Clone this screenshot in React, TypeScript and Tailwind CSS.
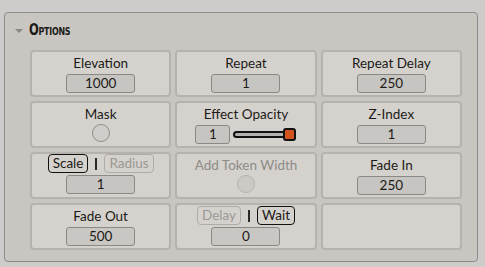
import React from "react";

const font = { fontFamily: "Lato, Roboto, sans-serif" };

function Input({ value, w = "w-[69px]", dotted = false }: { value: string; w?: string; dotted?: boolean }) {
  return (
    <div
      className={`${w} h-[19px] flex items-center justify-center rounded-[3px] border border-[#8a8986] text-[13.5px] leading-none text-[#1b1a17] ${dotted ? "bg-[#c9c7c3]" : "bg-[#c7c5c1]"}`}
    >
      {value}
    </div>
  );
}

function Cell({ children, className = "" }: { children?: React.ReactNode; className?: string }) {
  return (
    <div className={`h-[47px] rounded-[4px] border-2 border-[#b6b3ae] bg-[#d5d2cd] flex flex-col items-center ${className}`}>
      {children}
    </div>
  );
}

function Label({ children, disabled = false }: { children: React.ReactNode; disabled?: boolean }) {
  return (
    <div className={`h-[17px] text-[13.5px] leading-[17px] ${disabled ? "text-[#8e8c88]" : "text-[#1b1a17]"}`}>
      {children}
    </div>
  );
}

function Circle({ disabled = false }: { disabled?: boolean }) {
  return (
    <div
      className={`mt-[1px] w-[18px] h-[18px] rounded-full border ${disabled ? "border-[#b5b2ad] bg-[#cdcac5]" : "border-[#8f8d8a] bg-[#cfcdca]"}`}
    />
  );
}

function Btn({ children, active }: { children: React.ReactNode; active: boolean }) {
  return (
    <div
      className={`h-[19px] px-[4px] flex items-center rounded-[4px] border text-[13.5px] leading-none ${active ? "border-[#111] text-[#1b1a17]" : "border-[#aeaca8] text-[#9a9894]"}`}
    >
      {children}
    </div>
  );
}

function Sep() {
  return <div className="w-[2px] h-[12px] bg-[#2a2926]" />;
}

export default function App() {
  return (
    <div className="w-[485px] h-[267px] bg-[#cdcccb] pt-[12px] pl-[4px] pr-[7px]" style={font}>
      <div className="h-[250px] rounded-[4px] border border-[#8e8c88] bg-[#c9c6c1] flex flex-col">
        <div className="h-[37px] flex items-center pl-[10px] pb-[3px]">
          <svg width="8" height="6" viewBox="0 0 8 6" className="mr-[6px] mt-[2px]">
            <polygon points="0,1 8,1 4,5" fill="#8a8885" />
          </svg>
          <span
            className="inline-block origin-left scale-x-[0.8] text-[16px] font-bold tracking-[-0.3px] text-[#1b1a17]"
            style={{ fontFamily: "'DejaVu Sans Condensed', 'DejaVu Sans', sans-serif", fontVariant: "small-caps", fontStretch: "condensed" }}
          >
            Options
          </span>
        </div>
        <div className="ml-[25px] w-[432px] grid grid-cols-3 gap-[4px]">
          <Cell className="pt-[3px]">
            <Label>Elevation</Label>
            <div className="mt-[2px]"><Input value="1000" /></div>
          </Cell>
          <Cell className="pt-[3px]">
            <Label>Repeat</Label>
            <div className="mt-[2px]"><Input value="1" /></div>
          </Cell>
          <Cell className="pt-[3px]">
            <Label>Repeat Delay</Label>
            <div className="mt-[2px]"><Input value="250" /></div>
          </Cell>

          <Cell className="pt-[3px]">
            <Label>Mask</Label>
            <Circle />
          </Cell>
          <Cell className="pt-[3px]">
            <Label>Effect Opacity</Label>
            <div className="mt-[2px] flex items-center gap-[3px]">
              <Input value="1" w="w-[35px]" />
              <div className="relative w-[63px] h-[13px] flex items-center">
                <div className="w-[60px] h-[7px] rounded-full border-2 border-[#111] bg-[#b4b2ae]" />
                <div className="absolute right-0 top-0 w-[13px] h-[13px] rounded-[3px] border-2 border-[#111] bg-[#d2541c]" />
              </div>
            </div>
          </Cell>
          <Cell className="pt-[3px]">
            <Label>Z-Index</Label>
            <div className="mt-[2px]"><Input value="1" dotted /></div>
          </Cell>

          <Cell>
            <div className="h-[19px] flex items-center gap-[7px]">
              <Btn active>Scale</Btn>
              <Sep />
              <Btn active={false}>Radius</Btn>
            </div>
            <div className="mt-[2px]"><Input value="1" /></div>
          </Cell>
          <Cell className="pt-[3px]">
            <Label disabled>Add Token Width</Label>
            <Circle disabled />
          </Cell>
          <Cell className="pt-[3px]">
            <Label>Fade In</Label>
            <div className="mt-[2px]"><Input value="250" /></div>
          </Cell>

          <Cell className="pt-[3px]">
            <Label>Fade Out</Label>
            <div className="mt-[2px]"><Input value="500" dotted /></div>
          </Cell>
          <Cell className="pt-[1px]">
            <div className="h-[19px] flex items-center gap-[7px]">
              <Btn active={false}>Delay</Btn>
              <Sep />
              <Btn active>Wait</Btn>
            </div>
            <div className="mt-[2px]"><Input value="0" dotted /></div>
          </Cell>
          <Cell />
        </div>
      </div>
    </div>
  );
}
